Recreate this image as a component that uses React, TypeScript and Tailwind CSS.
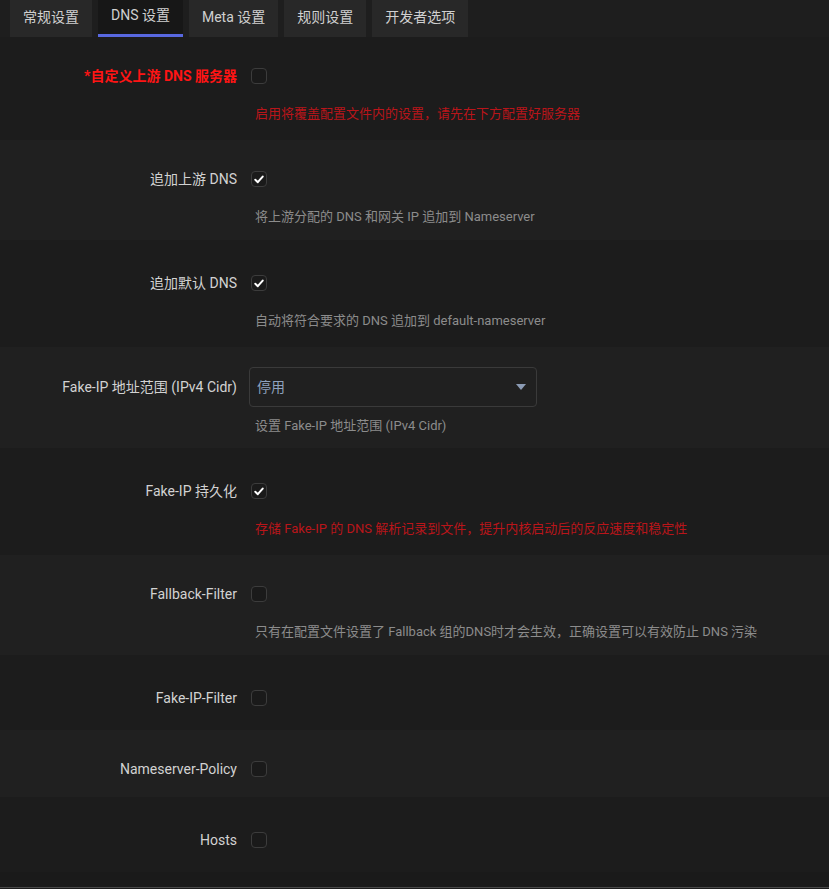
import React from "react";

const FONT = { fontFamily: '"Roboto", "Noto Sans CJK SC", sans-serif' };

const TABS = ["常规设置", "DNS 设置", "Meta 设置", "规则设置", "开发者选项"];

function Checkbox({ checked }: { checked?: boolean }) {
  return (
    <span className="ml-[2px] flex h-[16px] w-[16px] items-center justify-center rounded-[4px] border border-[#3c3c3c] bg-[#1a1a1a]">
      {checked && (
        <svg width="10" height="9" viewBox="0 0 10 9" fill="none">
          <path d="M1.3 4.8 L3.8 7.2 L8.7 1.6" stroke="#ffffff" strokeWidth="2" strokeLinecap="round" strokeLinejoin="round" />
        </svg>
      )}
    </span>
  );
}

interface RowProps {
  label: string;
  dark?: boolean;
  checked?: boolean;
  desc?: string;
  red?: boolean;
  redLabel?: boolean;
  first?: boolean;
}

function Row({ label, dark, checked, desc, red, redLabel, first }: RowProps) {
  const pad = first
    ? "pt-[28px] pb-[15px]"
    : dark
      ? desc
        ? "pt-[32px] pb-[15px]"
        : "pt-[32px] pb-[21px]"
      : desc
        ? "pt-[28px] pb-[12px]"
        : "pt-[28px] pb-[17px]";
  return (
    <div className={`${dark ? "bg-[#1c1c1c]" : "bg-[#202020]"} ${pad}`}>
      <div className="flex h-[22px] items-center">
        <div
          className={`w-[237px] text-right text-[14px] ${
            redLabel ? "font-bold text-[#ff1414]" : "text-[#d2d2d2]"
          }`}
        >
          {label}
        </div>
        <div className="ml-[12px] flex items-center">
          <Checkbox checked={checked} />
        </div>
      </div>
      {desc && (
        <div
          className={`mt-[16px] h-[22px] pl-[255px] text-[13px] leading-[22px] ${
            red ? "text-[#b9151a]" : "text-[#8c8c8c]"
          }`}
        >
          {desc}
        </div>
      )}
    </div>
  );
}

function SelectRow() {
  return (
    <div className="bg-[#202020] pt-[20px] pb-[11px]">
      <div className="flex h-[40px] items-center">
        <div className="w-[237px] text-right text-[14px] text-[#d2d2d2]">Fake-IP 地址范围 (IPv4 Cidr)</div>
        <div className="ml-[12px] flex h-[40px] w-[288px] items-center justify-between rounded-[4px] border border-[#3a3a3a] bg-[#202020] pl-[7px] pr-[10px]">
          <span className="text-[14px] text-[#8fa2bf]">停用</span>
          <svg width="10" height="6" viewBox="0 0 10 6">
            <path d="M0 0 L10 0 L5 6 Z" fill="#8b9bb4" />
          </svg>
        </div>
      </div>
      <div className="mt-[8px] h-[22px] pl-[255px] text-[13px] leading-[22px] text-[#8c8c8c]">
        设置 Fake-IP 地址范围 (IPv4 Cidr)
      </div>
    </div>
  );
}

export default function App() {
  return (
    <div className="min-h-[889px] w-[829px] bg-[#1c1c1c]" style={FONT}>
      {/* tabs */}
      <div className="flex h-[37px] gap-[6px] bg-[#1e1e1e] pl-[10px]">
        {TABS.map((t, i) => (
          <div
            key={t}
            className={`flex h-[37px] items-center px-[13px] pb-[3px] text-[14px] text-[#d0d0d0] ${
              i === 1 ? "border-b-[3px] border-[#5868e0] bg-[#171717] pb-0" : "bg-[#282828]"
            }`}
          >
            {t}
          </div>
        ))}
      </div>

      <Row first dark redLabel label="*自定义上游 DNS 服务器" desc="启用将覆盖配置文件内的设置，请先在下方配置好服务器" red />
      <Row label="追加上游 DNS" checked desc="将上游分配的 DNS 和网关 IP 追加到 Nameserver" />
      <Row dark label="追加默认 DNS" checked desc="自动将符合要求的 DNS 追加到 default-nameserver" />
      <SelectRow />
      <Row dark label="Fake-IP 持久化" checked desc="存储 Fake-IP 的 DNS 解析记录到文件，提升内核启动后的反应速度和稳定性" red />
      <Row label="Fallback-Filter" desc="只有在配置文件设置了 Fallback 组的DNS时才会生效，正确设置可以有效防止 DNS 污染" />
      <Row dark label="Fake-IP-Filter" />
      <Row label="Nameserver-Policy" />
      <Row dark label="Hosts" />

      <div className="h-[15px] bg-[#1a1a1a]" />
      <div className="h-[1px] bg-[#4a4a4a]" />
    </div>
  );
}
